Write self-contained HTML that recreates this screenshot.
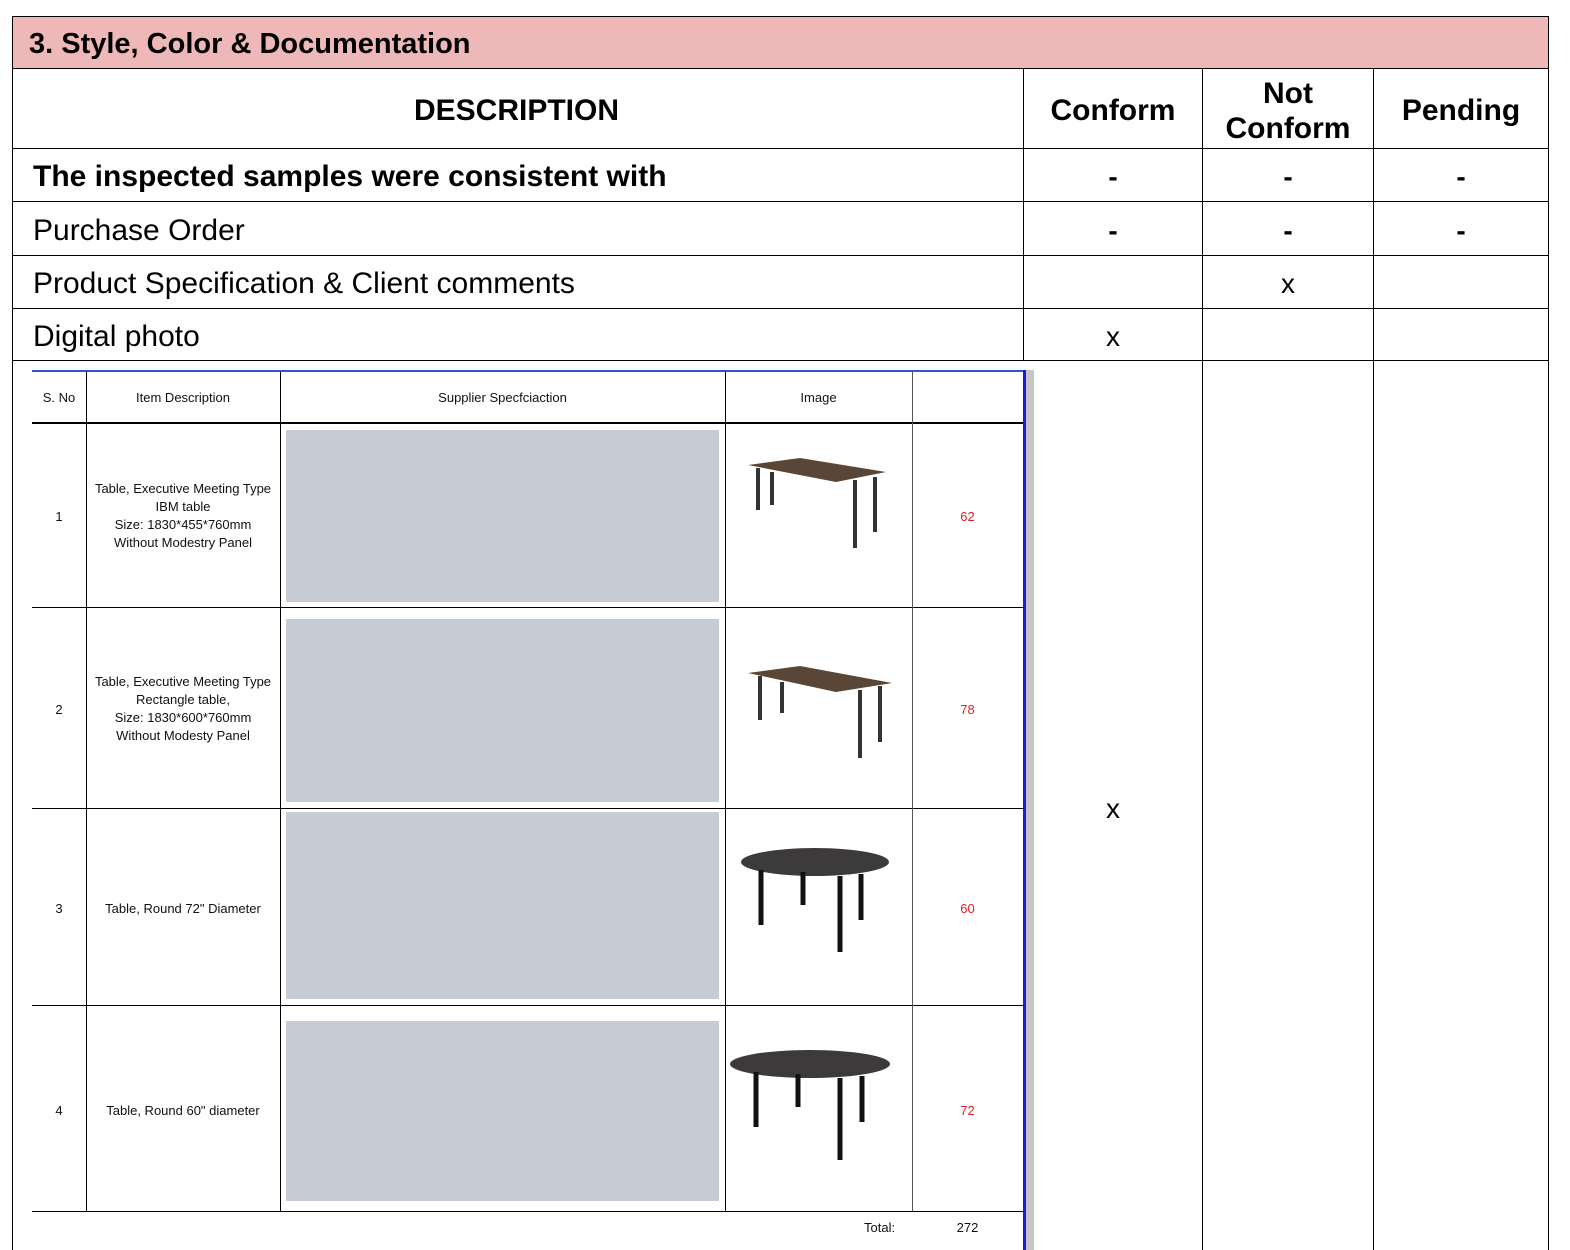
<!DOCTYPE html>
<html><head><meta charset="utf-8"><style>
body{margin:0;width:1570px;height:1250px;background:#fff;position:relative;overflow:hidden;font-family:"Liberation Sans",Arial,sans-serif}
.a{position:absolute}
.h{background:#000}
.t{position:absolute;white-space:nowrap}
.c{text-align:center}
.sm{font-size:13px;color:#111;text-align:center;line-height:18px}
.gray{position:absolute;background:#c6ccd6;left:286px;width:433px}
.red{color:#e0202a;font-size:13px}
</style></head><body>
<div class="a" style="left:12px;top:16px;width:1537px;height:52px;background:#eeb8b8"></div>
<div class="t" style="left:29px;top:28px;font-size:29px;font-weight:bold">3. Style, Color &amp; Documentation</div>
<div class="a h" style="left:12px;top:16px;width:1537px;height:1px"></div>
<div class="a h" style="left:12px;top:16px;width:1px;height:1234px"></div>
<div class="a h" style="left:1548px;top:16px;width:1px;height:1234px"></div>
<div class="a h" style="left:12px;top:68px;width:1537px;height:1px"></div>
<div class="a h" style="left:12px;top:148px;width:1537px;height:1px"></div>
<div class="a h" style="left:12px;top:201px;width:1537px;height:1px"></div>
<div class="a h" style="left:12px;top:255px;width:1537px;height:1px"></div>
<div class="a h" style="left:12px;top:308px;width:1537px;height:1px"></div>
<div class="a h" style="left:12px;top:360px;width:1537px;height:1px"></div>
<div class="a h" style="left:1023px;top:68px;width:1px;height:293px"></div>
<div class="a h" style="left:1202px;top:68px;width:1px;height:1182px"></div>
<div class="a h" style="left:1373px;top:68px;width:1px;height:1182px"></div>
<div class="t" style="left:414px;top:94px;font-size:30px;font-weight:bold">DESCRIPTION</div>
<div class="t c" style="left:1024px;width:178px;top:94px;font-size:30px;font-weight:bold">Conform</div>
<div class="t c" style="left:1203px;width:170px;top:76px;font-size:30px;font-weight:bold;line-height:35px">Not<br>Conform</div>
<div class="t c" style="left:1374px;width:174px;top:94px;font-size:30px;font-weight:bold">Pending</div>
<div class="t" style="left:33px;top:160px;font-size:30px;font-weight:bold">The inspected samples were consistent with</div>
<div class="t" style="left:33px;top:214px;font-size:30px">Purchase Order</div>
<div class="t" style="left:33px;top:267px;font-size:30px">Product Specification &amp; Client comments</div>
<div class="t" style="left:33px;top:320px;font-size:30px">Digital photo</div>
<div class="t c" style="left:1024px;width:178px;top:161px;font-size:28px;font-weight:bold">-</div>
<div class="t c" style="left:1203px;width:170px;top:161px;font-size:28px;font-weight:bold">-</div>
<div class="t c" style="left:1374px;width:174px;top:161px;font-size:28px;font-weight:bold">-</div>
<div class="t c" style="left:1024px;width:178px;top:215px;font-size:28px;font-weight:bold">-</div>
<div class="t c" style="left:1203px;width:170px;top:215px;font-size:28px;font-weight:bold">-</div>
<div class="t c" style="left:1374px;width:174px;top:215px;font-size:28px;font-weight:bold">-</div>
<div class="t c" style="left:1203px;width:170px;top:268px;font-size:28px">x</div>
<div class="t c" style="left:1024px;width:178px;top:321px;font-size:28px">x</div>
<div class="t c" style="left:1024px;width:178px;top:793px;font-size:28px">x</div>
<div class="a" style="left:32px;top:370px;width:991px;height:2px;background:#3a4fd0"></div>
<div class="a" style="left:1023px;top:370px;width:3px;height:880px;background:#1a1ae0"></div>
<div class="a" style="left:1026px;top:370px;width:8px;height:880px;background:#c8c4c8"></div>
<div class="a h" style="left:32px;top:422px;width:991px;height:2px"></div>
<div class="a h" style="left:32px;top:607px;width:991px;height:1px"></div>
<div class="a h" style="left:32px;top:808px;width:991px;height:1px"></div>
<div class="a h" style="left:32px;top:1005px;width:991px;height:1px"></div>
<div class="a h" style="left:32px;top:1211px;width:991px;height:1px"></div>
<div class="a h" style="left:86px;top:372px;width:1px;height:839px"></div>
<div class="a h" style="left:280px;top:372px;width:1px;height:839px"></div>
<div class="a h" style="left:725px;top:372px;width:1px;height:839px"></div>
<div class="a" style="left:912px;top:372px;width:1px;height:839px;background:#555"></div>
<div class="t sm" style="left:32px;width:54px;top:389px">S. No</div>
<div class="t sm" style="left:86px;width:194px;top:389px">Item Description</div>
<div class="t sm" style="left:280px;width:445px;top:389px">Supplier Specfciaction</div>
<div class="t sm" style="left:725px;width:187px;top:389px">Image</div>
<div class="gray" style="top:430px;height:172px"></div>
<div class="gray" style="top:619px;height:183px"></div>
<div class="gray" style="top:812px;height:187px"></div>
<div class="gray" style="top:1021px;height:180px"></div>
<div class="t sm" style="left:32px;width:54px;top:508px">1</div>
<div class="t sm" style="left:32px;width:54px;top:701px">2</div>
<div class="t sm" style="left:32px;width:54px;top:900px">3</div>
<div class="t sm" style="left:32px;width:54px;top:1102px">4</div>
<div class="t sm" style="left:86px;width:194px;top:480px">Table, Executive Meeting Type<br>IBM table<br>Size: 1830*455*760mm<br>Without Modestry Panel</div>
<div class="t sm" style="left:86px;width:194px;top:673px">Table, Executive Meeting Type<br>Rectangle table,<br>Size: 1830*600*760mm<br>Without Modesty Panel</div>
<div class="t sm" style="left:86px;width:194px;top:900px">Table, Round 72" Diameter</div>
<div class="t sm" style="left:86px;width:194px;top:1102px">Table, Round 60" diameter</div>
<div class="t red c" style="left:912px;width:111px;top:509px">62</div>
<div class="t red c" style="left:912px;width:111px;top:702px">78</div>
<div class="t red c" style="left:912px;width:111px;top:901px">60</div>
<div class="t red c" style="left:912px;width:111px;top:1103px">72</div>
<div class="t sm" style="left:864px;top:1219px">Total:</div>
<div class="t sm" style="left:912px;width:111px;top:1219px">272</div>
<svg class="a" style="left:740px;top:450px" width="160" height="110"><polygon points="8,15 60,8 146,22 96,32" fill="#5a4636"/><g stroke="#333" stroke-width="4"><line x1="18" y1="18" x2="18" y2="60"/><line x1="32" y1="22" x2="32" y2="55"/><line x1="115" y1="30" x2="115" y2="98"/><line x1="135" y1="27" x2="135" y2="82"/></g></svg>
<svg class="a" style="left:740px;top:658px" width="160" height="110"><polygon points="8,15 60,8 152,25 96,34" fill="#5a4636"/><g stroke="#333" stroke-width="4"><line x1="20" y1="18" x2="20" y2="62"/><line x1="42" y1="24" x2="42" y2="55"/><line x1="120" y1="32" x2="120" y2="100"/><line x1="140" y1="28" x2="140" y2="84"/></g></svg>
<svg class="a" style="left:735px;top:840px" width="170" height="120"><ellipse cx="80" cy="22" rx="74" ry="14" fill="#3c3a3a"/><g stroke="#111" stroke-width="5"><line x1="26" y1="30" x2="26" y2="85"/><line x1="68" y1="32" x2="68" y2="65"/><line x1="105" y1="36" x2="105" y2="112"/><line x1="126" y1="34" x2="126" y2="80"/></g></svg>
<svg class="a" style="left:730px;top:1042px" width="170" height="120"><ellipse cx="80" cy="22" rx="80" ry="14" fill="#3c3a3a"/><g stroke="#111" stroke-width="5"><line x1="26" y1="30" x2="26" y2="85"/><line x1="68" y1="32" x2="68" y2="65"/><line x1="110" y1="36" x2="110" y2="118"/><line x1="132" y1="34" x2="132" y2="80"/></g></svg>
</body></html>
